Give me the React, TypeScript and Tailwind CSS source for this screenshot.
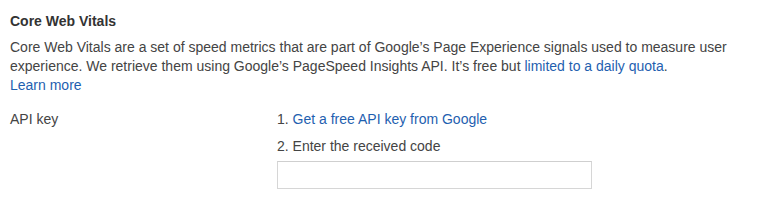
export default function App() {
  return (
    <div className="w-[768px] h-[200px] bg-white pl-[10px] pt-[12px] text-[14px] leading-[19px] text-[#444] font-['Liberation_Sans',Arial,sans-serif]">
      <h2 className="font-bold text-[#333]">Core Web Vitals</h2>
      <p className="mt-[7px] w-[740px]">
        Core Web Vitals are a set of speed metrics that are part of Google’s Page Experience signals used to measure user
        experience. We retrieve them using Google’s PageSpeed Insights API. It’s free but{' '}
        <a href="#" className="text-[#1f5fb0]">limited to a daily quota</a>.
        <br />
        <a href="#" className="text-[#1f5fb0]">Learn more</a>
      </p>

      <div className="mt-[15px] flex">
        <div className="w-[267px]">API key</div>
        <div className="flex flex-col">
          <div>
            1. <a href="#" className="text-[#1f5fb0]">Get a free API key from Google</a>
          </div>
          <div className="mt-[8px]">2. Enter the received code</div>
          <input
            type="text"
            className="mt-[5px] w-[315px] h-[28px] border border-[#d6d6d6] border-t-[#cfcfcf] bg-white outline-none"
          />
        </div>
      </div>
    </div>
  )
}
